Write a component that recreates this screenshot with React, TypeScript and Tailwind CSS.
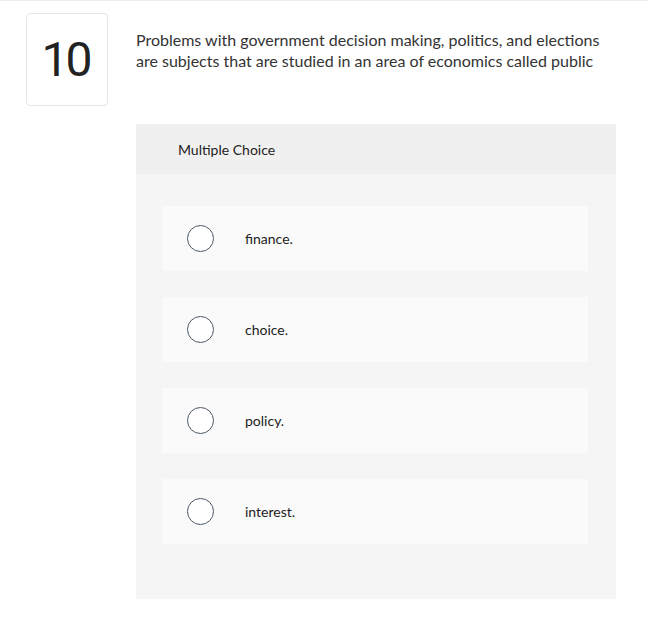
import React from "react";

const options = ["finance.", "choice.", "policy.", "interest."];

export default function App() {
  return (
    <div
      className="w-[648px] h-[623px] bg-white text-[#333333] border-t border-[#ececec]"
      style={{ fontFamily: "Lato, 'Open Sans', sans-serif" }}
    >
      <div className="flex pt-[12px] pl-[26px]">
        <div className="w-[82px] h-[93px] shrink-0 rounded-[4px] border border-[#e6e6e6] flex items-center justify-center">
          <span
            className="text-[48px] leading-none text-[#222222] font-normal tracking-[-3px] pr-[3px]"
            style={{ fontFamily: "Roboto, sans-serif" }}
          >
            10
          </span>
        </div>
        <div className="ml-[28px] pt-[16px] w-[480px] text-[16px] leading-[21px] text-[#333333]">
          Problems with government decision making, politics, and elections are subjects that are studied in an area of economics called public
        </div>
      </div>
      <div className="ml-[136px] mt-[18px] w-[480px] h-[475px] bg-[#f5f5f5] flex flex-col">
        <div className="h-[50px] bg-[#f0f0f0] flex items-center pl-[42px] text-[14px] text-[#222222]">
          Multiple Choice
        </div>
        <div className="flex flex-col gap-[26px] pt-[32px] pl-[26px] pr-[28px]">
          {options.map((o) => (
            <div key={o} className="h-[65px] bg-[#fafafa] flex items-center pl-[25px]">
              <div className="w-[27px] h-[27px] rounded-full border-[1.5px] border-[#4b5866] bg-white shrink-0" />
              <span className="ml-[31px] text-[14px] text-[#222222]">{o}</span>
            </div>
          ))}
        </div>
      </div>
    </div>
  );
}
